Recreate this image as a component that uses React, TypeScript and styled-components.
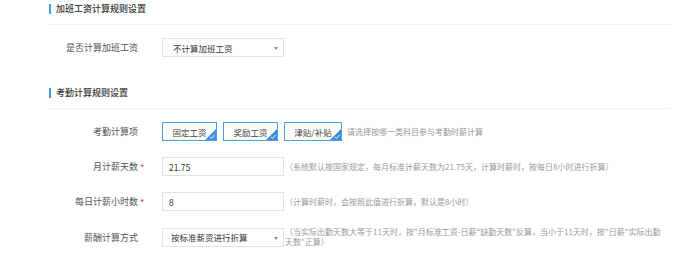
import React from "react";
import styled, { createGlobalStyle } from "styled-components";

const Global = createGlobalStyle`
  html, body { margin: 0; padding: 0; background: #fff; }
  body {
    font-family: "Noto Sans CJK SC", "Noto Sans", sans-serif;
    color: #444;
    text-spacing-trim: space-all;
  }
  * { box-sizing: border-box; }
`;

const Page = styled.div`
  width: 680px;
  height: 257px;
  padding: 4px 10px 0 49px;
  overflow: hidden;
`;

const Section = styled.section<{ $gap?: number }>`
  margin-top: ${(p) => p.$gap ?? 0}px;
`;

const SectionHead = styled.div`
  padding-bottom: 10px;
  border-bottom: 1px solid #eef0f3;
`;

const Title = styled.div`
  height: 10px;
  line-height: 10px;
  border-left: 2px solid #3f9fe0;
  padding-left: 5px;
  font-size: 9px;
  color: #333;
  font-weight: 500;
`;

const Rows = styled.div`
  display: flex;
  flex-direction: column;
  gap: 16px;
  padding-top: 13px;
`;

const Row = styled.div`
  display: flex;
  align-items: center;
  min-height: 19px;
`;

const Label = styled.div`
  width: 97px;
  flex: none;
  display: flex;
  justify-content: flex-end;
  align-items: center;
  font-size: 9px;
  color: #555;
  margin-right: 16px;
`;

const Star = styled.span`
  width: 8px;
  color: #e4393c;
  font-size: 9px;
  text-align: center;
  padding-top: 2px;
`;

const Field = styled.div`
  width: 122px;
  height: 19px;
  flex: none;
  border: 1px solid #dfe4ea;
  background: #fff;
  display: flex;
  align-items: center;
  font-size: 8.5px;
  color: #333;
  position: relative;
`;

const InputBox = styled(Field)`
  padding-left: 6px;
`;

const SelectBox = styled(Field)<{ $pad: number }>`
  padding-left: ${(p) => p.$pad}px;
`;

const Caret = styled.span`
  position: absolute;
  right: 5px;
  top: 8px;
  width: 0;
  height: 0;
  border-left: 2px solid transparent;
  border-right: 2px solid transparent;
  border-top: 3px solid #888;
`;

const Hint = styled.div`
  font-size: 8px;
  line-height: 10px;
  color: #999;
  margin-left: 1px;
  flex: 1;
  min-width: 0;
  max-width: 376px;
`;

const Chips = styled.div`
  display: flex;
  gap: 6px;
  margin-right: 5px;
`;

const Chip = styled.div<{ $w: number }>`
  position: relative;
  width: ${(p) => p.$w}px;
  height: 19px;
  border: 1px solid #4a9fe2;
  display: flex;
  align-items: center;
  justify-content: center;
  font-size: 8.5px;
  color: #444;
  overflow: hidden;
`;

const Corner = styled.svg`
  position: absolute;
  right: 0;
  bottom: 0;
  width: 11px;
  height: 11px;
`;

const ChipHint = styled.div`
  font-size: 8px;
  color: #999;
`;

const Check = () => (
  <Corner viewBox="0 0 11 11">
    <polygon points="11,0 11,11 0,11" fill="#3f8fdc" />
    <polyline points="5,8 6.6,9.4 9.5,6" fill="none" stroke="#fff" strokeWidth="0.9" />
  </Corner>
);

const chips = [
  { t: "固定工资", w: 55 },
  { t: "奖励工资", w: 55 },
  { t: "津贴/补贴", w: 58 },
];

export default function App() {
  return (
    <>
      <Global />
      <Page>
        <Section>
          <SectionHead>
            <Title>加班工资计算规则设置</Title>
          </SectionHead>
          <Rows>
            <Row>
              <Label>
                是否计算加班工资<Star />
              </Label>
              <SelectBox $pad={10}>
                不计算加班工资
                <Caret />
              </SelectBox>
            </Row>
          </Rows>
        </Section>

        <Section $gap={31}>
          <SectionHead>
            <Title>考勤计算规则设置</Title>
          </SectionHead>
          <Rows>
            <Row>
              <Label>
                考勤计算项<Star />
              </Label>
              <Chips>
                {chips.map((c) => (
                  <Chip key={c.t} $w={c.w}>
                    {c.t}
                    <Check />
                  </Chip>
                ))}
              </Chips>
              <ChipHint>请选择按哪一类科目参与考勤时薪计算</ChipHint>
            </Row>
            <Row>
              <Label>
                月计薪天数<Star>*</Star>
              </Label>
              <InputBox>21.75</InputBox>
              <Hint>（系统默认按国家规定，每月标准计薪天数为21.75天，计算时薪时，按每日8小时进行折算）</Hint>
            </Row>
            <Row>
              <Label>
                每日计薪小时数<Star>*</Star>
              </Label>
              <InputBox>8</InputBox>
              <Hint>（计算时薪时，会按照此值进行折算，默认是8小时）</Hint>
            </Row>
            <Row>
              <Label>
                薪酬计算方式<Star />
              </Label>
              <SelectBox $pad={8}>
                按标准薪资进行折算
                <Caret />
              </SelectBox>
              <Hint>
                （当实际出勤天数大等于11天时，按"月标准工资-日薪*缺勤天数"反算，当小于11天时，按"日薪*实际出勤天数"正算）
              </Hint>
            </Row>
          </Rows>
        </Section>
      </Page>
    </>
  );
}
